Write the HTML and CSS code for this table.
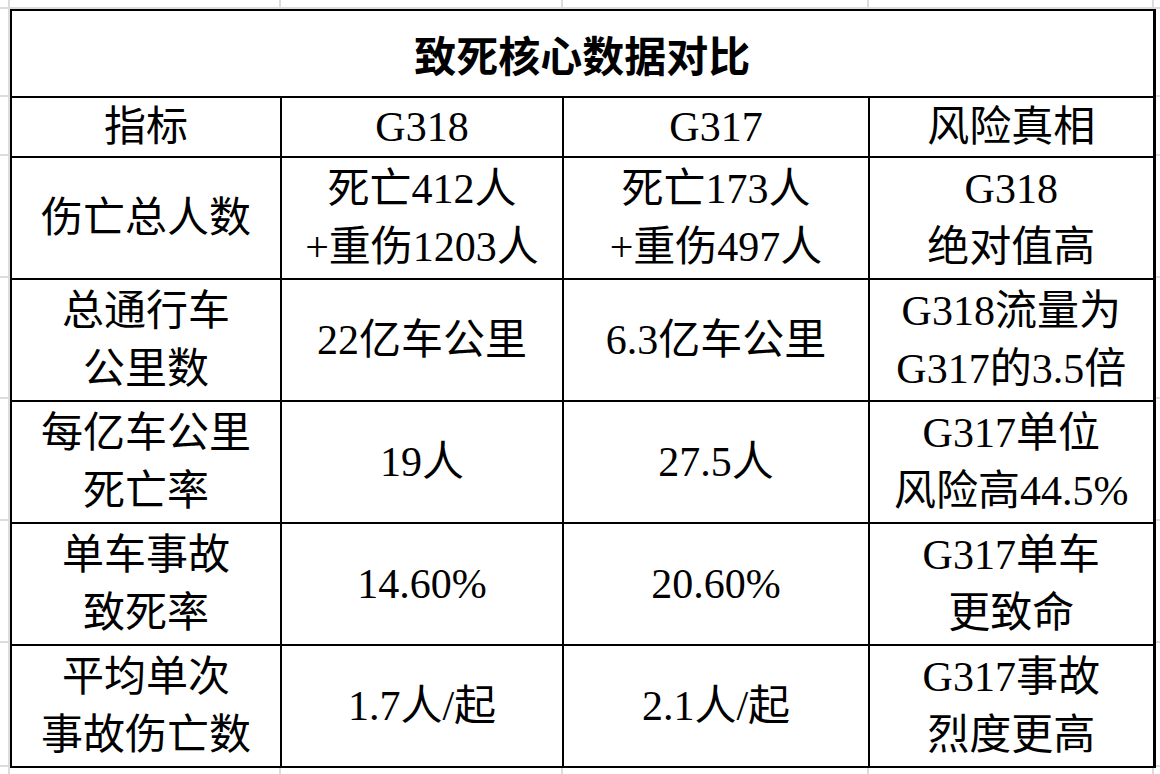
FILE: index.html
```html
<!DOCTYPE html>
<html lang="zh-CN">
<head>
<meta charset="utf-8">
<title>致死核心数据对比</title>
<link rel="stylesheet" href="styles.css">
</head>
<body>
<div class="sheet">
  <table class="cmp">
    <colgroup>
      <col class="c1"><col class="c2"><col class="c3"><col class="c4">
    </colgroup>
    <tr class="title-row"><th colspan="4" class="title">致死核心数据对比</th></tr>
    <tr class="head-row"><td>指标</td><td>G318</td><td>G317</td><td>风险真相</td></tr>
    <tr class="row r1"><td>伤亡总人数</td><td>死亡412人<br>+重伤1203人</td><td>死亡173人<br>+重伤497人</td><td>G318<br>绝对值高</td></tr>
    <tr class="row r2"><td>总通行车<br>公里数</td><td>22亿车公里</td><td>6.3亿车公里</td><td>G318流量为<br>G317的3.5倍</td></tr>
    <tr class="row r3"><td>每亿车公里<br>死亡率</td><td>19人</td><td>27.5人</td><td>G317单位<br>风险高44.5%</td></tr>
    <tr class="row r4"><td>单车事故<br>致死率</td><td>14.60%</td><td>20.60%</td><td>G317单车<br>更致命</td></tr>
    <tr class="row r5"><td>平均单次<br>事故伤亡数</td><td>1.7人/起</td><td>2.1人/起</td><td>G317事故<br>烈度更高</td></tr>
  </table>
</div>
</body>
</html>
```
FILE: styles.css
```css
html, body {
  margin: 0;
  padding: 0;
}
body {
  width: 1160px;
  height: 774px;
  overflow: hidden;
  background-color: #fff;
  background-image:
    linear-gradient(#dcdcdc, #dcdcdc),
    linear-gradient(#dcdcdc, #dcdcdc),
    linear-gradient(#dcdcdc, #dcdcdc),
    linear-gradient(#dcdcdc, #dcdcdc),
    linear-gradient(#dcdcdc, #dcdcdc),
    linear-gradient(#dcdcdc, #dcdcdc),
    linear-gradient(#dcdcdc, #dcdcdc),
    linear-gradient(#dcdcdc, #dcdcdc),
    linear-gradient(#dcdcdc, #dcdcdc),
    linear-gradient(#dcdcdc, #dcdcdc),
    linear-gradient(#dcdcdc, #dcdcdc),
    linear-gradient(#dcdcdc, #dcdcdc),
    linear-gradient(#dcdcdc, #dcdcdc);
  background-repeat: no-repeat;
  background-size:
    2px 100%, 2px 100%, 2px 100%, 2px 100%, 2px 100%,
    100% 2px, 100% 2px, 100% 2px, 100% 2px, 100% 2px, 100% 2px, 100% 2px, 100% 2px;
  background-position:
    8px 0, 279px 0, 561px 0, 867px 0, 1152px 0,
    0 7px, 0 95px, 0 154px, 0 276px, 0 397px, 0 519px, 0 641px, 0 765px;
}
.sheet {
  padding: 9px 0 0 10px;
}
.cmp {
  border-collapse: collapse;
  table-layout: fixed;
  width: 1143px;
  background: #fff;
  font-family: "Liberation Serif", "Noto Sans CJK SC", serif;
  font-size: 42px;
  color: #000;
}
.c1 { width: 270px; }
.c2 { width: 282px; }
.c3 { width: 306px; }
.c4 { width: 285px; }
.cmp th,
.cmp td {
  border: 2px solid #000;
  padding: 0;
  text-align: center;
  vertical-align: middle;
  line-height: 58px;
  white-space: nowrap;
  overflow: hidden;
}
.cmp td:last-child,
.cmp th:last-child {
  border-right-width: 3px;
}
.title {
  font-family: "Noto Sans CJK SC", sans-serif;
  font-weight: 700;
  font-size: 42px;
  line-height: 40px;
}
.title-row { height: 87px; }
.head-row { height: 59px; }
.row { height: 122px; }
```
